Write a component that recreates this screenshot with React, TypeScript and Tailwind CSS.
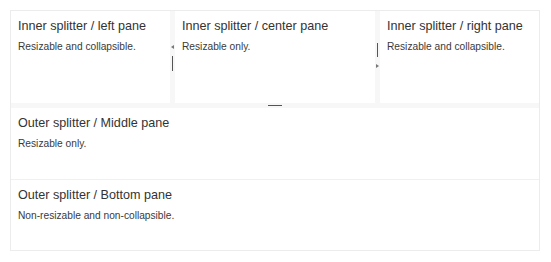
import React from 'react'

const font = { fontFamily: '"Liberation Sans", Arial, sans-serif' }

function Pane({ title, text, className = '' }: { title: string; text: string; className?: string }) {
  return (
    <div className={`bg-white pt-[6px] pl-[7px] ${className}`}>
      <h3 className="text-[12.6px] leading-[18px] text-[#333333] font-normal">{title}</h3>
      <p className="mt-[5px] text-[10.2px] leading-[14px] text-[#3a3a3a]">{text}</p>
    </div>
  )
}

function Arrow({ dir }: { dir: 'left' | 'right' }) {
  return (
    <svg width="3" height="4" viewBox="0 0 3 4" className="block">
      {dir === 'left' ? <path d="M0 2 L3 0 L3 4 Z" fill="#777777" /> : <path d="M3 2 L0 0 L0 4 Z" fill="#777777" />}
    </svg>
  )
}

export default function App() {
  return (
    <div className="w-[551px] h-[262px] bg-white p-[10px]" style={font}>
      <div className="w-[530px] border border-[#ececec] flex flex-col">
        <div className="flex h-[92px]">
          <Pane className="w-[159px]" title="Inner splitter / left pane" text="Resizable and collapsible." />
          <div className="w-[5px] bg-[#f7f7f7] flex flex-col items-center pt-[34px]">
            <Arrow dir="left" />
            <div className="mt-[7px] w-[1.5px] h-[15px] bg-[#555555]" />
          </div>
          <Pane className="w-[200px]" title="Inner splitter / center pane" text="Resizable only." />
          <div className="w-[5px] bg-[#f7f7f7] flex flex-col items-center pt-[32px]">
            <div className="w-[1.5px] h-[14px] bg-[#555555]" />
            <div className="mt-[7px]">
              <Arrow dir="right" />
            </div>
          </div>
          <Pane className="w-[159px]" title="Inner splitter / right pane" text="Resizable and collapsible." />
        </div>
        <div className="h-[5px] bg-[#f7f7f7] flex items-center justify-center">
          <div className="w-[14px] h-[1.5px] bg-[#555555]" />
        </div>
        <Pane className="h-[71px]" title="Outer splitter / Middle pane" text="Resizable only." />
        <Pane className="h-[71px] border-t border-[#f0f0f0]" title="Outer splitter / Bottom pane" text="Non-resizable and non-collapsible." />
      </div>
    </div>
  )
}
